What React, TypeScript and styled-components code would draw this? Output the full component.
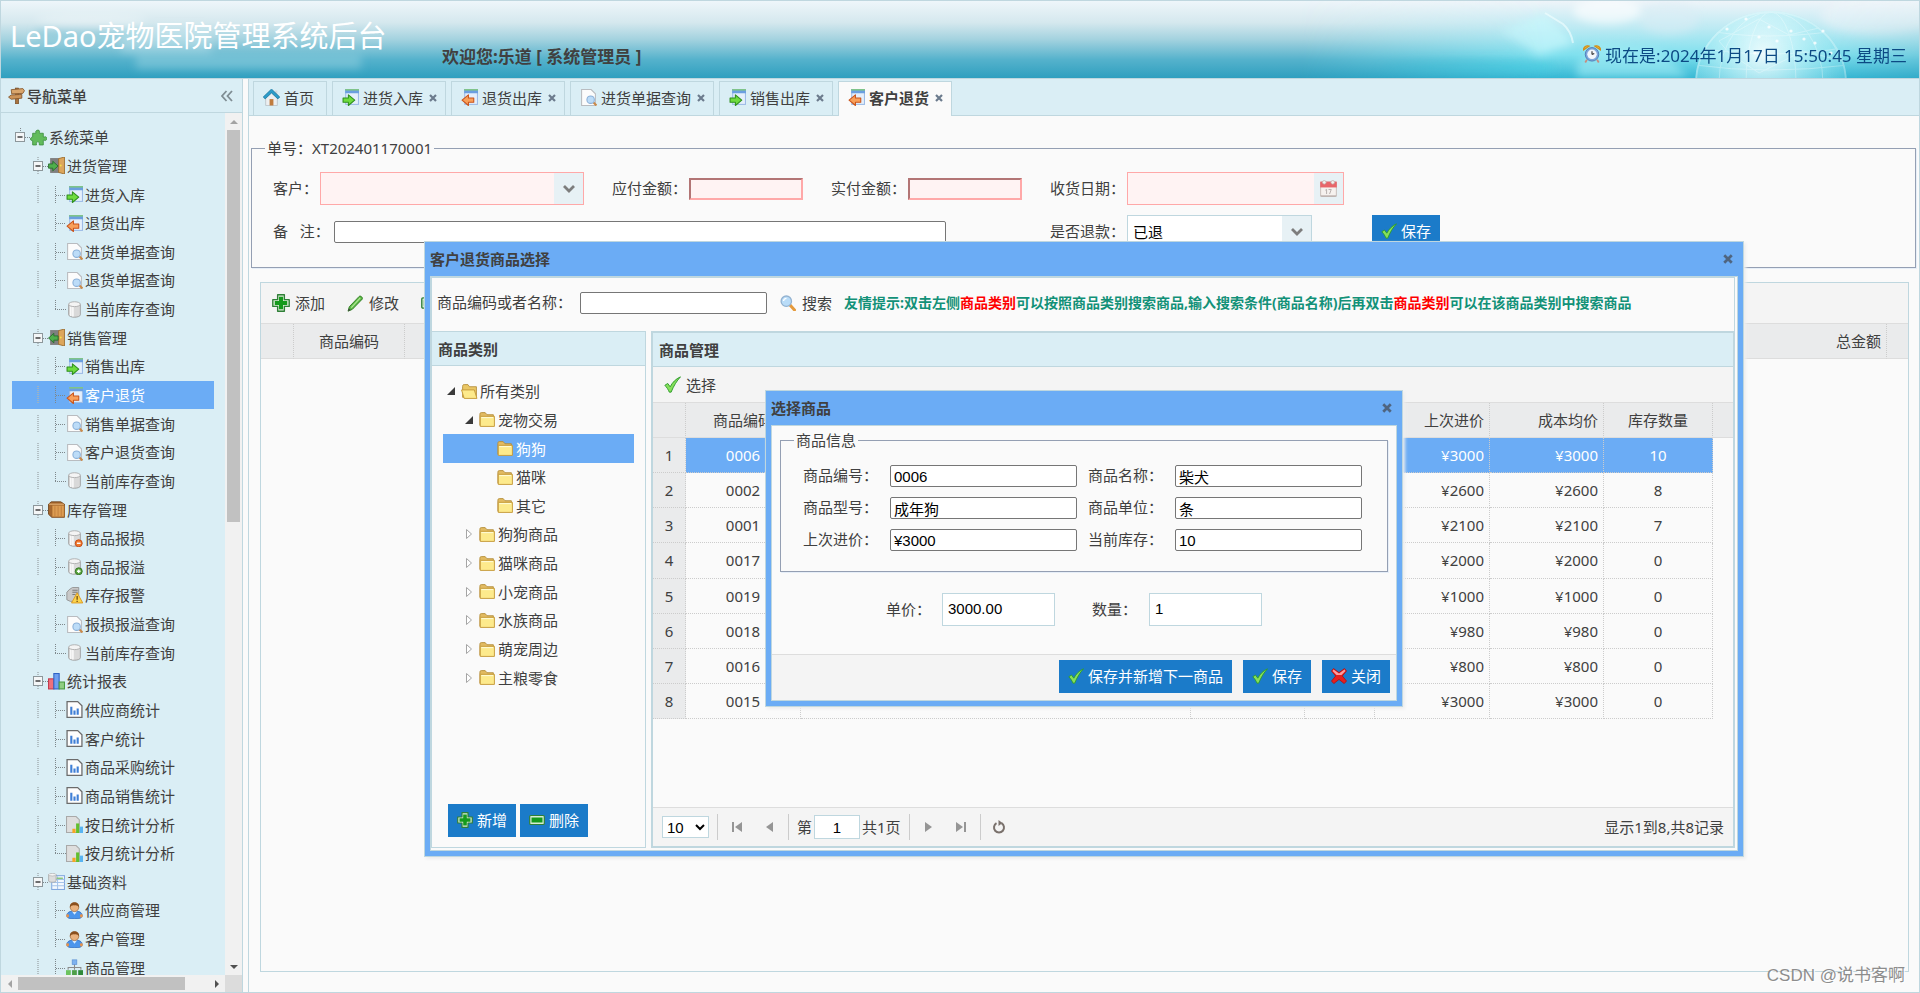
import React from 'react';
import styled, { createGlobalStyle, css } from 'styled-components';

const c = {
  pane: '#daeef5',
  line: '#bfd7df',
  blue: '#6bacf5',
  button: '#1b7bc9',
  text: '#404040',
  bg: '#fafafa',
  bar: '#f4f4f4',
  head: '#eaebec',
};
const sans = '"Noto Sans", "Noto Sans CJK SC", sans-serif';
const arial = '"Liberation Sans", "Noto Sans CJK SC", sans-serif';

const Global = createGlobalStyle`
  *, *::before, *::after { box-sizing: border-box; }
  body { margin: 0; background: ${c.bg}; color: ${c.text}; font: 15px/20px ${sans}; overflow: hidden; }
  button, input, select { font: 15px/20px ${arial}; color: #000; margin: 0; }
  svg { display: block; flex: none; }
`;

/* ---------- icons ---------- */

const Svg = ({ size = 16, children }: { size?: number; children: React.ReactNode }) => (
  <svg width={size} height={size} viewBox="0 0 16 16" aria-hidden="true">{children}</svg>
);

const DbShape = () => (
  <>
    <path d="M2.5 3v10c0 1.200 2.500 2.300 5.500 2.300s5.500-1.100 5.500-2.300V3z" fill="#d9d9d9" stroke="#9a9a9a" strokeWidth=".8" />
    <path d="M4.500 5v9M6.500 5.500v9" stroke="#f8f8f8" strokeWidth="1.600" />
    <ellipse cx="8" cy="3" rx="5.500" ry="2.300" fill="#f4f4f4" stroke="#a8a8a8" strokeWidth=".8" />
  </>
);
const WindowShape = () => (
  <>
    <rect x="3.500" y=".5" width="12" height="14" fill="#e4effb" stroke="#9dbbe6" />
    <rect x="3" y="0" width="13" height="4" fill="#6b9fe0" />
    <rect x="3" y="0" width="13" height="1.500" fill="#7fc48a" />
  </>
);
const GreenArrow = ({ d = 'M1 8.500h5V5.500l6 5-6 5v-3H1z' }: { d?: string }) => (
  <path d={d} fill="#6fdc3e" stroke="#2f8f1e" strokeWidth="1" strokeLinejoin="round" />
);
const PageShape = () => (
  <path d="M1.500.5h9l4 4v11h-13z" fill="#fcfcfc" stroke="#b9bcc0" />
);

const icons: Record<string, React.ReactNode> = {
  signpost: (
    <>
      <rect x="7" y="1" width="3" height="15" fill="#a9743f" stroke="#6e4622" strokeWidth=".6" />
      <path d="M3 2.500 14 1.500 15.500 3.500 14 6 3.500 6.500z" fill="#d9a56b" stroke="#84552b" strokeWidth=".8" />
      <path d="M13 7 3 7.500 .5 9.500 3 11.500 13 10.500z" fill="#cc9459" stroke="#84552b" strokeWidth=".8" />
    </>
  ),
  puzzle: (
    <path d="M5.500 3.500C4.500 1 9 0 9 2.500c0 .6-.3 1 0 1.500h3.500v3.500c.6.400 1.200-.3 2-.2 1.900.2 1.700 3.500-.2 3.500-.8 0-1.200-.6-1.800-.3V15H8.800c-.4-.5.300-1.200 0-2-.7-1.500-2.900-1-2.900.3 0 .7.500 1.200.2 1.700H2.500v-4c-.5-.4-2 .2-2-1.500S2 7.800 2.500 7.500V4h3z" fill="#62bb5c" stroke="#3f8f41" strokeWidth=".8" />
  ),
  doorIn: (
    <>
      <rect x="2" y="1" width="9" height="14" fill="#7f7f7f" />
      <path d="M10 1.500 15.500 0v16L10 14.500z" fill="#dca65c" stroke="#9a6a2c" strokeWidth=".8" />
      <circle cx="12" cy="8" r=".9" fill="#f8e04a" />
      <path d="M.5 6.500h4V4l5 4.500-5 4.500v-2.500h-4z" fill="#4fae4c" stroke="#256a2b" strokeWidth=".8" />
    </>
  ),
  doorOut: (
    <>
      <rect x="2" y="1" width="9" height="14" fill="#7f7f7f" />
      <path d="M10 1.500 15.500 0v16L10 14.500z" fill="#dca65c" stroke="#9a6a2c" strokeWidth=".8" />
      <circle cx="12" cy="8" r=".9" fill="#f8e04a" />
      <path d="M9.500 6.500h-4V4l-5 4.500 5 4.500v-2.500h4z" fill="#4fae4c" stroke="#256a2b" strokeWidth=".8" />
    </>
  ),
  goodsIn: (<><WindowShape /><GreenArrow /></>),
  goodsOut: (
    <>
      <WindowShape />
      <path d="M12 8.500H7V5.500l-6 5 6 5v-3h5z" fill="#f9a05a" stroke="#c9541c" strokeLinejoin="round" />
    </>
  ),
  pageFind: (
    <>
      <PageShape />
      <path d="m12.500 12.500 3 3" stroke="#c98a4b" strokeWidth="2" />
      <circle cx="10" cy="10" r="3.500" fill="#bcdcf8" stroke="#8ab0d8" />
    </>
  ),
  db: <DbShape />,
  dbDelete: (<><DbShape /><circle cx="12" cy="12.500" r="3.300" fill="#f07a2e" stroke="#c2410c" strokeWidth=".8" /><path d="M10.300 12.500h3.400" stroke="#fff" strokeWidth="1.300" /></>),
  dbAdd: (<><DbShape /><circle cx="12" cy="12.500" r="3.300" fill="#5aa63e" stroke="#2f6e1d" strokeWidth=".8" /><path d="M10.300 12.500h3.400M12 10.800v3.400" stroke="#fff" strokeWidth="1.300" /></>),
  warn: (
    <>
      <path d="M3 2.500 6 .5h6v13H4L.8 12V5z" fill="#c9c9c9" stroke="#8d8d8d" strokeWidth=".8" />
      <path d="M6 3h5M6 5h5M6 7h3" stroke="#7c7c7c" />
      <path d="M10.500 5.500 15.800 15H5.200z" fill="#fbd44c" stroke="#dd9a22" strokeWidth=".9" />
      <path d="M10.500 8.500v3.500M10.500 13v1" stroke="#7a5312" strokeWidth="1.300" />
    </>
  ),
  box: (
    <>
      <path d="M.5 3 3 .8h9L15.500 3v12.300h-12L.5 12.500z" fill="#a8692f" stroke="#6b3f17" strokeWidth=".8" />
      <path d="M3.800 4h11.500v11H3.800z" fill="#dd9d52" stroke="#a3662c" strokeWidth=".6" />
      <path d="M6.500 5v10M9.500 5v10M12.500 5v10" stroke="#c48340" />
      <path d="M1 3h14" stroke="#e6b477" />
    </>
  ),
  bars: (
    <>
      <rect x=".5" y="5.500" width="5" height="9.500" fill="#f0707c" stroke="#c43b4c" />
      <rect x="5.500" y=".5" width="5" height="14.500" fill="#6f9ff0" stroke="#2f62c4" />
      <rect x="10.500" y="8.500" width="5" height="6.500" fill="#8fce82" stroke="#4a9a42" />
    </>
  ),
  report: (
    <>
      <path d="M1 .6h10l4 4v10.800H1z" fill="#fdfdfd" stroke="#6b6b6b" strokeWidth="1.200" />
      <path d="M5 5.500V13M8 9v4M11 7v6" stroke="#3f7fd6" strokeWidth="2" />
    </>
  ),
  pageChart: (
    <>
      <path d="M.5.5h9l3 3v12H.5z" fill="#dedede" stroke="#a9a9a9" />
      <rect x="6" y="12" width="3" height="4" fill="#f5a623" />
      <rect x="9.500" y="7" width="3" height="9" fill="#62bf2e" />
      <rect x="13" y="10" width="3" height="6" fill="#58b4f2" />
    </>
  ),
  table: (
    <>
      <rect x="3.500" y="2.500" width="12" height="13" fill="#f3f8fe" stroke="#83a8de" />
      <path d="M3.500 6h12M3.500 9h12M3.500 12h12M9 3v12" stroke="#a5c3ea" />
      <path d="M8 5h6" stroke="#8bc77b" strokeWidth="1.500" />
      <path d="M.6 1.500v6c0 1.600 7 1.600 7 0v-6z" fill="#ddd" stroke="#a2a2a2" strokeWidth=".7" />
      <ellipse cx="4.100" cy="1.600" rx="3.500" ry="1.200" fill="#f6f6f6" stroke="#aaa" strokeWidth=".6" />
    </>
  ),
  user: (
    <>
      <path d="M.8 13c0-3.500 3-4.500 7.200-4.500s7.200 1 7.200 4.500C15 15.500 12 15.800 8 15.800S1 15.500.8 13z" fill="#4b95ec" stroke="#2a62b4" strokeWidth=".7" />
      <path d="M5.500 8.800 8 12l2.500-3.200z" fill="#d8ecff" />
      <circle cx="8" cy="5" r="4" fill="#eab27e" stroke="#9c5f2a" strokeWidth=".6" />
      <path d="M3.700 5.500C3.300 1.500 5.500.3 8 .3s4.700 1.200 4.300 5.200C11.500 3.500 10 3 8 3.200 6 3 4.500 3.500 3.700 5.500z" fill="#8a4f1d" />
      <rect x=".3" y="11.500" width="2.500" height="3" rx="1" fill="#e9934a" />
      <rect x="13.200" y="11.500" width="2.500" height="3" rx="1" fill="#e9934a" />
    </>
  ),
  sitemap: (
    <>
      <path d="M8 5v5M2 10V8h12v2" stroke="#8a8a8a" fill="none" />
      <rect x="5.800" y=".8" width="4.400" height="4.400" fill="#7eb2ef" stroke="#5a8ed2" strokeWidth=".6" />
      <rect x="0" y="10.500" width="4.500" height="5" fill="#6cc35f" />
      <rect x="5.700" y="10.500" width="4.500" height="5" fill="#4f9f48" />
      <rect x="11.500" y="10.500" width="4.500" height="5" fill="#2f8a3a" />
    </>
  ),
  home: (
    <>
      <path d="M2.500 8v7.500h11V8L8 3z" fill="#eceff1" stroke="#b3bbc1" strokeWidth=".7" />
      <rect x="11.300" y="1.500" width="2.200" height="4" fill="#d4d9dd" />
      <path d="M8 0 .2 7.500 2 9.300l6-5.500 6 5.500 1.800-1.800z" fill="#2b9cc9" stroke="#156b93" strokeWidth=".6" />
      <rect x="6.200" y="9.500" width="3.600" height="6" fill="#c07c3e" />
    </>
  ),
  calendar: (
    <>
      <rect x=".6" y="2" width="14.800" height="13.500" rx=".8" fill="#f6f2ef" stroke="#c3b8b2" strokeWidth=".8" />
      <rect x=".2" y="1.500" width="15.600" height="5.500" fill="#e8666a" />
      <circle cx="4" cy="2.200" r="1.700" fill="#f3f0ee" stroke="#b9a9a6" strokeWidth=".6" />
      <circle cx="12" cy="2.200" r="1.700" fill="#f3f0ee" stroke="#b9a9a6" strokeWidth=".6" />
      <path d="m5 9.600 1.200-.8v4.400M8 8.900h2.600L9 13.200" stroke="#b6adab" fill="none" strokeWidth=".9" />
      <path d="M.5 15h15" stroke="#b5aaa6" />
    </>
  ),
  check: (
    <path d="M.8 8.800 3.500 7l2.300 3.200C8 6 11 2.800 15.500.8 12 4.500 9 9.500 6.700 15.200H5C4 12.800 2.800 10.800.8 8.800z" fill="#86e05a" stroke="#2d9a2c" strokeWidth=".9" strokeLinejoin="round" />
  ),
  plus: (
    <>
      <path d="M5 .7h6V5h4.300v6H11v4.300H5V11H.7V5H5z" fill="#d8ecd4" stroke="#2f7f37" strokeWidth="1.200" strokeLinejoin="round" />
      <path d="M6.200 2.500h3.600v3.700h3.700v3.600H9.800v3.700H6.200V9.800H2.500V6.200h3.700z" fill="#159a1c" />
    </>
  ),
  minus: (
    <>
      <rect x=".7" y="3.500" width="14.600" height="9" rx="1" fill="#d8ecd4" stroke="#2f7f37" strokeWidth="1.200" />
      <rect x="2.500" y="5.500" width="11" height="5" fill="#159a1c" />
    </>
  ),
  pencil: (
    <>
      <path d="M1 15.200 2.200 11 11.500 1.300c1-1 3.800 1 2.800 2.600L5 13.500z" fill="#5cb946" stroke="#2f7c22" strokeWidth=".9" />
      <path d="m4 11.800 8.500-9" stroke="#b7ea9b" />
      <path d="m1 15.200.8-2.600 1.700 1.600z" fill="#444" />
    </>
  ),
  search: (
    <>
      <path d="m10 10 4.500 5" stroke="#e59a3c" strokeWidth="3" strokeLinecap="round" />
      <circle cx="6.300" cy="6.200" r="5.200" fill="#b9dcf8" stroke="#93b2d0" strokeWidth="1.300" />
      <path d="M3.500 6c.2-1.700 1.300-2.600 3-2.700" stroke="#fff" fill="none" strokeWidth="1.300" />
    </>
  ),
  cancel: (
    <>
      <path d="M2.500.6 8 4.600 13.500.6l2 2.400-4.200 5 4.200 5-2.300 2.600L8 11.400l-5.200 4.200L.5 13l4.200-5L.5 3z" fill="#e51f1f" stroke="#b30d0d" strokeWidth=".8" strokeLinejoin="round" />
      <path d="M2.500 1.500 8 5.600l5.500-4.100 1 1.400L10.500 7h-5l-4-4z" fill="#ff9d9d" />
    </>
  ),
  alarm: (
    <>
      <path d="m3.500 13-1.500 2.500M12.500 13l1.500 2.500" stroke="#c98b7e" strokeWidth="1.600" />
      <path d="M.4 4.500C.4 1.500 3 0 5.500 1zM15.600 4.500C15.600 1.500 13 0 10.500 1z" fill="#f2b632" stroke="#cf8d1b" strokeWidth="1" />
      <circle cx="8" cy="8.300" r="6" fill="#7ca6dc" stroke="#4c78b6" strokeWidth=".8" />
      <circle cx="8" cy="8.300" r="4.200" fill="#f2f6fb" />
      <path d="M8 8.500V5.500M8 8.500l2-1" stroke="#333" />
    </>
  ),
  folder: (
    <>
      <path d="M.8 3.500c0-1.500.5-2 1.500-2h3.500L7.500 3.500h6v10H.8z" fill="#e2bb62" stroke="#b28a35" strokeWidth=".8" />
      <path d="M1.200 5h13.300v9.500H1.200z" fill="#fdea8c" stroke="#c59b3c" strokeWidth=".9" />
      <path d="M2.200 6.200h11" stroke="#fffbd6" />
    </>
  ),
  folderOpen: (
    <>
      <path d="M1.500 3.500c0-1.500.5-2 1.500-2h3.500l1.500 2h6.500v10h-13z" fill="#eac765" stroke="#b28a35" strokeWidth=".8" />
      <path d="M.5 6.500h12l2.500 8H3z" fill="#fdea8c" stroke="#c59b3c" strokeWidth=".9" />
    </>
  ),
};

const Icon = ({ name, size }: { name: string; size?: number }) => <Svg size={size}>{icons[name]}</Svg>;

const Cross = ({ size = 8, color = '#6c7b8d' }: { size?: number; color?: string }) => (
  <svg width={size} height={size} viewBox="0 0 8 8" aria-hidden="true">
    <path d="m1 1 6 6M7 1 1 7" stroke={color} strokeWidth="2.200" />
  </svg>
);

const Chevron = () => (
  <svg width="12" height="8" viewBox="0 0 12 8" aria-hidden="true">
    <path d="m1 1 5 5 5-5" fill="none" stroke="#7d7d7d" strokeWidth="2.800" />
  </svg>
);

type Joint = 'minusRoot' | 'minus' | 'line' | 'join' | 'last' | 'none' | 'open' | 'closed';
const JointCell = ({ kind }: { kind: Joint }) => {
  const soft = <path d="M8 0v18" stroke="#a9b4b8" strokeWidth="2" strokeDasharray="1 1" opacity=".8" />;
  const dash = { stroke: '#7e878b', strokeWidth: 1, strokeDasharray: '1 1' };
  return (
    <svg width="18" height="18" viewBox="0 0 18 18" aria-hidden="true">
      {kind === 'line' && soft}
      {kind === 'minus' && soft}
      {kind === 'minusRoot' && <path d="M8.500 0v5" {...dash} />}
      {kind === 'join' && <path d="M7.500 0v18M8 9.500h10" {...dash} />}
      {kind === 'last' && <path d="M7.500 0v9M7 9.500h11" {...dash} />}
      {(kind === 'minus' || kind === 'minusRoot') && (
        <>
          <path d="M13 9.500h5" {...dash} />
          <rect x="3.500" y="4.500" width="9" height="9" fill="#f4f6f7" stroke="#8d979b" />
          <path d="M5.500 9h5" stroke="#333" strokeWidth="1.400" />
        </>
      )}
      {kind === 'open' && <path d="M12 5v8H4z" fill="#3a3a3a" />}
      {kind === 'closed' && <path d="M5.500 4.500v9l5-4.500z" fill="#fff" stroke="#a5a5a5" />}
    </svg>
  );
};

/* ---------- page frame ---------- */

const Page = styled.div`
  display: grid;
  grid-template: 78px minmax(0, 1fr) / 242px minmax(0, 1fr);
  column-gap: 5px;
  height: 100vh;
  border: 1px solid ${c.line};
  position: relative;
`;
const Header = styled.header`
  grid-column: 1 / -1;
  position: relative;
  display: flex;
  border-bottom: 1px solid ${c.line};
  background: linear-gradient(#eef6fa 0, #d5e8ee 28%, #a3d2df 50%, #55b2cc 76%, #2f9fbf 100%);
  overflow: hidden;
`;
const HeaderArt = styled.svg<{ $side: 'left' | 'right' }>`
  position: absolute;
  top: 0;
  ${p => p.$side}: 0;
`;
const Brand = styled.h1`
  position: relative;
  margin: 15px 0 0 9px;
  width: 432px;
  font-size: 29px;
  line-height: 40px;
  font-weight: 400;
  color: #fff;
  white-space: nowrap;
`;
const Welcome = styled.div`
  position: relative;
  margin-top: 46px;
  font-size: 17px;
  font-weight: 700;
`;
const Clock = styled.div`
  position: relative;
  display: flex;
  gap: 4px;
  margin: 44px 12px 0 auto;
  font-size: 17px;
  line-height: 22px;
  color: #0c4a84;
`;

/* ---------- navigation ---------- */

const Nav = styled.nav`
  display: flex;
  flex-direction: column;
  min-height: 0;
  background: ${c.pane};
  border-right: 1px solid ${c.line};
`;
const NavTitle = styled.h2`
  display: flex;
  align-items: center;
  gap: 2px;
  flex: none;
  margin: 0;
  height: 34px;
  padding: 0 9px 0 7px;
  border-bottom: 1px solid ${c.line};
  font-size: 15px;
  line-height: 20px;
  font-weight: 500;
`;
const Collapse = styled.button`
  margin-left: auto;
  padding: 0;
  border: 0;
  background: none;
`;
const NavBody = styled.div`
  flex: 1;
  min-height: 0;
  display: grid;
  grid-template: minmax(0, 1fr) 17px / minmax(0, 1fr) 17px;
`;
const NavScroll = styled.div`
  overflow: hidden;
  padding: 10px 11px 0;
`;
const Track = styled.div<{ $row?: boolean }>`
  display: flex;
  flex-direction: ${p => (p.$row ? 'row' : 'column')};
  align-items: center;
  justify-content: space-between;
  background: #f1f1f1;
`;
const ScrollStart = styled.div<{ $row?: boolean }>`
  display: flex;
  flex-direction: ${p => (p.$row ? 'row' : 'column')};
  align-items: center;
`;
const Arrow = styled.span`
  display: grid;
  place-items: center;
  width: 17px;
  height: 17px;
`;
const Thumb = styled.span<{ $row?: boolean }>`
  background: #c1c1c1;
  ${p => (p.$row ? css`width: 167px; height: 13px;` : css`width: 13px; height: 392px;`)}
`;
const Corner = styled.div`background: #dcdcdc;`;

const Tree = styled.ul<{ $height: number }>`
  list-style: none;
  margin: 0;
  padding: 0;
  display: grid;
  grid-auto-rows: 1fr;
  height: ${p => p.$height}px;
`;
const TreeLink = styled.a<{ $on?: boolean }>`
  display: flex;
  align-items: center;
  height: 100%;
  color: ${p => (p.$on ? '#fff' : c.text)};
  background: ${p => (p.$on ? c.blue : 'transparent')};
  text-decoration: none;
  white-space: nowrap;
`;
const TreeIcon = styled.span`
  flex: none;
  width: 18px;
`;
const TreeText = styled.span`margin-left: 1px;`;

type Node = [joints: Joint[], icon: string, label: string];
const leaf = (icon: string, label: string, last?: boolean): Node => [['none', 'line', last ? 'last' : 'join'], icon, label];
const group = (icon: string, label: string): Node => [['none', 'minus'], icon, label];

const menu: Node[] = [
  [['minusRoot'], 'puzzle', '系统菜单'],
  group('doorIn', '进货管理'),
  leaf('goodsIn', '进货入库'),
  leaf('goodsOut', '退货出库'),
  leaf('pageFind', '进货单据查询'),
  leaf('pageFind', '退货单据查询'),
  leaf('db', '当前库存查询', true),
  group('doorOut', '销售管理'),
  leaf('goodsIn', '销售出库'),
  leaf('goodsOut', '客户退货'),
  leaf('pageFind', '销售单据查询'),
  leaf('pageFind', '客户退货查询'),
  leaf('db', '当前库存查询', true),
  group('box', '库存管理'),
  leaf('dbDelete', '商品报损'),
  leaf('dbAdd', '商品报溢'),
  leaf('warn', '库存报警'),
  leaf('pageFind', '报损报溢查询'),
  leaf('db', '当前库存查询', true),
  group('bars', '统计报表'),
  leaf('report', '供应商统计'),
  leaf('report', '客户统计'),
  leaf('report', '商品采购统计'),
  leaf('report', '商品销售统计'),
  leaf('pageChart', '按日统计分析'),
  leaf('pageChart', '按月统计分析', true),
  group('table', '基础资料'),
  leaf('user', '供应商管理'),
  leaf('user', '客户管理'),
  leaf('sitemap', '商品管理'),
];
const categories: Node[] = [
  [['open'], 'folderOpen', '所有类别'],
  [['none', 'open'], 'folder', '宠物交易'],
  [['none', 'none', 'none'], 'folder', '狗狗'],
  [['none', 'none', 'none'], 'folder', '猫咪'],
  [['none', 'none', 'none'], 'folder', '其它'],
  ...['狗狗商品', '猫咪商品', '小宠商品', '水族商品', '萌宠周边', '主粮零食'].map(
    (t): Node => [['none', 'closed'], 'folder', t],
  ),
];

const TreeView = ({ nodes, selected, height }: { nodes: Node[]; selected: string; height: number }) => (
  <Tree $height={height}>
    {nodes.map(([joints, icon, label], i) => (
      <li key={i}>
        <TreeLink href="#" $on={label === selected}>
          {joints.map((k, j) => <JointCell key={j} kind={k} />)}
          <TreeIcon><Icon name={icon} size={17} /></TreeIcon>
          <TreeText>{label}</TreeText>
        </TreeLink>
      </li>
    ))}
  </Tree>
);

/* ---------- workspace ---------- */

const Main = styled.main`
  display: flex;
  flex-direction: column;
  min-width: 0;
  min-height: 0;
  border-left: 1px solid ${c.line};
`;
const Tabs = styled.div`
  display: flex;
  align-items: flex-end;
  gap: 5px;
  flex: none;
  height: 37px;
  padding-left: 4px;
  background: ${c.pane};
  border-bottom: 1px solid ${c.line};
`;
const Tab = styled.div<{ $on?: boolean; $plain?: boolean }>`
  display: flex;
  align-items: center;
  height: 34px;
  padding: 0 ${p => (p.$plain ? 12 : 8)}px 2px 9px;
  border: 1px solid ${c.line};
  border-bottom: 0;
  background: ${p => (p.$on ? c.bg : c.pane)};
  font-weight: ${p => (p.$on ? 700 : 400)};
  ${p => p.$on && css`height: 35px; margin-bottom: -1px; padding-bottom: 3px;`}
`;
const TabName = styled.button`
  display: flex;
  align-items: center;
  gap: 4px;
  padding: 0;
  border: 0;
  background: none;
  font: inherit;
  color: inherit;
`;
const IconButton = styled.button`
  display: grid;
  place-items: center;
  margin-left: 6px;
  padding: 0;
  border: 0;
  background: none;
`;

const Fieldset = styled.fieldset<{ $dialog?: boolean }>`
  min-width: 0;
  border: 1px solid #949fb3;
  box-shadow: 1px 1px 0 #e6eef8;
  ${p => p.$dialog
    ? css`margin: 0; padding: 15px 22px 20px;`
    : css`margin: 22px 3px 0 2px; padding: 14px 21px 19px;`}
`;
const Legend = styled.legend<{ $inset: number }>`
  margin-left: ${p => p.$inset}px;
  padding: 0 2px;
  line-height: 20px;
`;
const FormRow = styled.div`
  display: flex;
  align-items: center;
  height: 33px;
  & + & { margin-top: 10px; }
`;
const Label = styled.label<{ $w: number; $gap?: number }>`
  flex: none;
  width: ${p => p.$w}px;
  margin-left: ${p => p.$gap || 0}px;
  padding-bottom: 2px;
  white-space: nowrap;
`;
const TextBox = styled.input<{ $w: number }>`
  flex: none;
  width: ${p => p.$w}px;
  height: 22px;
  padding: 0 3px;
  border: 1px solid #767676;
  border-radius: 2px;
  background: #fff;
`;
const MoneyBox = styled(TextBox)`
  border: 2px solid #ffa8a8;
  border-top-color: #b27575;
  border-left-color: #b27575;
  border-radius: 0;
  background: #fff3f3;
`;
const PlainBox = styled(TextBox)`
  height: 33px;
  padding: 0 5px 2px;
  border-color: ${c.line};
  border-radius: 0;
`;
const Combo = styled.div<{ $w: number; $invalid?: boolean }>`
  display: flex;
  flex: none;
  width: ${p => p.$w}px;
  height: 33px;
  border: 1px solid ${p => (p.$invalid ? '#ffa8a8' : c.line)};
  background: ${p => (p.$invalid ? '#fff3f3' : '#fff')};
`;
const comboField = css`
  flex: 1;
  min-width: 0;
  padding: 0 5px;
  border: 0;
  background: none;
  appearance: none;
  font-family: ${sans};
`;
const ComboSelect = styled.select`${comboField}`;
const ComboInput = styled.input`${comboField}`;
const Addon = styled.button`
  display: grid;
  place-items: center;
  width: 29px;
  padding: 0;
  border: 0;
  background: #e7f1f5;
`;
const Button = styled.button<{ $gap?: number }>`
  display: flex;
  align-items: center;
  gap: 4px;
  height: 33px;
  margin-left: ${p => p.$gap || 0}px;
  padding: 0 9px 2px;
  border: 0;
  background: ${c.button};
  color: #fff;
  font-family: ${sans};
  white-space: nowrap;
`;
const Tool = styled.button`
  display: flex;
  align-items: center;
  gap: 5px;
  padding: 0;
  border: 0;
  background: none;
  color: ${c.text};
  font-family: ${sans};
`;
const GridPanel = styled.section`
  flex: 1;
  min-height: 0;
  margin: 14px 10px 20px 11px;
  border: 1px solid ${c.line};
`;
const ToolBar = styled.div<{ $h: number }>`
  display: flex;
  align-items: center;
  gap: 22px;
  height: ${p => p.$h}px;
  padding: 0 11px;
  background: ${c.bar};
  border-bottom: 1px solid #ddd;
`;
const Table = styled.table`
  width: 100%;
  border-collapse: separate;
  border-spacing: 0;
  table-layout: fixed;
  th { font-weight: 400; }
`;
const Th = styled.th<{ $align?: string; $end?: boolean; $open?: boolean }>`
  height: 35px;
  padding: 0 5px;
  text-align: ${p => p.$align || 'center'};
  background: ${c.head};
  border-bottom: 1px solid #ddd;
  border-right: ${p => (p.$end || p.$open ? 0 : '1px dotted #ccc')};
`;
const Rows = styled.tbody`
  height: 281px;
`;
const Td = styled.td<{ $align?: string; $end?: boolean }>`
  padding: 0 5px;
  text-align: ${p => p.$align || 'center'};
  ${p => !p.$end && css`
    border-right: 1px dotted #ccc;
    border-bottom: 1px dotted #ccc;
  `}
`;
const Tr = styled.tr<{ $on?: boolean }>`
  td:first-child { background: ${c.head}; }
  ${p => p.$on && css`
    td:not(:first-child):not(:last-child) { background: ${c.blue}; color: #fff; }
  `}
`;

/* ---------- floating windows ---------- */

const Window = styled.section`
  position: absolute;
  display: flex;
  flex-direction: column;
  padding: 0 5px 5px;
  border: 1px solid ${c.line};
  background: ${c.blue};
  box-shadow: 2px 2px 3px #eee;
`;
const PickWindow = styled(Window)`
  top: 240px;
  left: 423px;
  right: 175px;
  height: 616px;
`;
const ItemWindow = styled(Window)`
  top: 389px;
  left: 764px;
  width: 638px;
`;
const WindowTitle = styled.h2`
  display: flex;
  align-items: center;
  justify-content: space-between;
  flex: none;
  height: 34px;
  margin: 0;
  padding: 0 5px 1px 0;
  font-size: 15px;
  line-height: 20px;
  font-weight: 700;
`;
const WindowBody = styled.div`
  flex: 1;
  min-height: 0;
  display: flex;
  flex-direction: column;
  border: 1px solid ${c.line};
  background: ${c.bg};
`;
const PickBody = styled(WindowBody)`
  padding: 0 2px 2px 0;
`;
const SearchBar = styled.div`
  display: flex;
  align-items: center;
  height: 54px;
  padding: 0 0 3px 5px;
  border: 1px solid ${c.line};
  border-bottom: 0;
`;
const SearchTool = styled(Tool)`
  gap: 6px;
  margin: 0 12px 0 13px;
`;
const Tip = styled.p`
  margin: 0;
  font-size: 14px;
  font-weight: 700;
  color: #129178;
  white-space: nowrap;
  em { font-style: normal; color: #f00; }
`;
const Split = styled.div`
  flex: 1;
  min-height: 0;
  display: grid;
  grid-template-columns: 215px minmax(0, 1fr);
  column-gap: 5px;
`;
const Side = styled.div`
  display: flex;
  flex-direction: column;
  border: 1px solid ${c.line};
`;
const Center = styled.div`
  display: flex;
  flex-direction: column;
  border: 2px solid ${c.line};
`;
const PaneTitle = styled.h3`
  margin: 0;
  height: 34px;
  padding-left: 6px;
  background: ${c.pane};
  border-bottom: 1px solid ${c.line};
  font-size: 15px;
  line-height: 34px;
  font-weight: 700;
`;
const SideTree = styled.div`
  flex: 1;
  padding: 11px 11px 0;
`;
const SideButtons = styled.div`
  display: flex;
  gap: 4px;
  padding: 0 0 10px 16px;
`;
const Pager = styled.div`
  display: flex;
  align-items: center;
  height: 39px;
  margin-top: auto;
  padding: 0 9px;
  background: ${c.bar};
  border-top: 1px solid #ddd;
`;
const PageSize = styled.select`
  width: 47px;
  height: 22px;
  border: 1px solid ${c.line};
  background: #fff;
`;
const PageNo = styled(TextBox)`
  height: 24px;
  margin: 0 2px;
  text-align: center;
  border-color: ${c.line};
  border-radius: 0;
`;
const Sep = styled.span`
  width: 1px;
  height: 26px;
  margin: 0 8px;
  background: #ccc;
`;
const PageButton = styled.button`
  display: grid;
  place-items: center;
  width: 21px;
  height: 22px;
  padding: 0;
  border: 0;
  background: none;
  & + & { margin-left: 12px; }
`;
const Summary = styled.span`margin-left: auto;`;
const ItemContent = styled.div`
  padding: 4px 8px 28px;
`;
const InfoGrid = styled.div`
  display: grid;
  grid-template-columns: 274px 274px;
  column-gap: 11px;
  row-gap: 10px;
`;
const InfoField = styled.div`
  display: flex;
  align-items: center;
`;
const PriceRow = styled.div`
  display: flex;
  margin: 21px 0 0 106px;
  align-items: center;
`;
const ItemFooter = styled.div`
  display: flex;
  justify-content: flex-end;
  gap: 11px;
  padding: 5px 6px 7px;
  background: ${c.bar};
  border-top: 1px solid #ddd;
`;
const Watermark = styled.div`
  position: absolute;
  right: 14px;
  bottom: 4px;
  font: 17px/24px ${arial};
  color: #8d8d8d;
  text-shadow: 1px 1px 0 #fff;
`;

const tabs: [string, string][] = [
  ['home', '首页'],
  ['goodsIn', '进货入库'],
  ['goodsOut', '退货出库'],
  ['pageFind', '进货单据查询'],
  ['goodsIn', '销售出库'],
  ['goodsOut', '客户退货'],
];
const goods: [string, string, string][] = [
  ['0006', '¥3000', '10'],
  ['0002', '¥2600', '8'],
  ['0001', '¥2100', '7'],
  ['0017', '¥2000', '0'],
  ['0019', '¥1000', '0'],
  ['0018', '¥980', '0'],
  ['0016', '¥800', '0'],
  ['0015', '¥3000', '0'],
];
const info: [string, string][] = [
  ['商品编号', '0006'],
  ['商品名称', '柴犬'],
  ['商品型号', '成年狗'],
  ['商品单位', '条'],
  ['上次进价', '¥3000'],
  ['当前库存', '10'],
];

const Triangle = ({ d, fill = '#505050' }: { d: string; fill?: string }) => (
  <svg width="8" height="8" viewBox="0 0 8 8" aria-hidden="true"><path d={d} fill={fill} /></svg>
);
const PageIcon = ({ d, bar }: { d: string; bar?: string }) => (
  <svg width="12" height="12" viewBox="0 0 12 12" aria-hidden="true">
    <path d={d} fill="#959595" />
    {bar && <path d={bar} stroke="#959595" strokeWidth="2" />}
  </svg>
);

const HeaderDecor = () => (
  <>
    <HeaderArt $side="left" width="420" height="77" viewBox="0 0 420 77" aria-hidden="true">
      <defs>
        <filter id="soft" x="-20%" y="-60%" width="140%" height="220%"><feGaussianBlur stdDeviation="4" /></filter>
      </defs>
      <g filter="url(#soft)">
        <ellipse cx="90" cy="20" rx="55" ry="7" fill="#fff" opacity=".3" />
        <rect x="35" y="27" width="105" height="12" fill="#6fbfd2" opacity=".4" />
        <rect x="120" y="26" width="90" height="26" fill="#d4eef4" opacity=".3" />
        <rect x="135" y="54" width="225" height="14" fill="#b6e2ec" opacity=".35" />
      </g>
    </HeaderArt>
    <HeaderArt $side="right" width="620" height="77" viewBox="0 0 620 77" aria-hidden="true">
      <defs>
        <linearGradient id="fade"><stop offset="0" stopColor="#fff" stopOpacity="0" /><stop offset=".4" stopColor="#fff" /><stop offset=".85" stopColor="#fff" /><stop offset="1" stopColor="#fff" stopOpacity=".5" /></linearGradient>
        <linearGradient id="cyan" x1="0" y1="0" x2="0" y2="1">
          <stop offset="0" stopColor="#eef4f9" /><stop offset=".35" stopColor="#bdeaf3" /><stop offset=".7" stopColor="#7fe0ee" /><stop offset="1" stopColor="#37b8d4" />
        </linearGradient>
        <radialGradient id="globe" cx=".45" cy=".3" r=".6"><stop offset="0" stopColor="#fff" /><stop offset=".4" stopColor="#c9f5fa" stopOpacity=".8" /><stop offset="1" stopColor="#79dcea" stopOpacity=".4" /></radialGradient>
        <mask id="fadeMask"><rect width="620" height="77" fill="url(#fade)" /></mask>
        <filter id="blur" x="-20%" y="-20%" width="140%" height="140%"><feGaussianBlur stdDeviation="4" /></filter>
        <clipPath id="globeClip"><ellipse cx="472" cy="82" rx="76" ry="72" /></clipPath>
      </defs>
      <g mask="url(#fadeMask)">
        <rect width="620" height="77" fill="url(#cyan)" />
        <g filter="url(#blur)">
          <path d="M200 30 246 12 275 42 240 54z" fill="#c6f7fc" opacity=".7" />
          <ellipse cx="308" cy="10" rx="34" ry="13" fill="#fff" opacity=".6" />
          <path d="M278 62 300 42l60 6 30 28H278z" fill="#a4ecf5" opacity=".6" />
          <ellipse cx="370" cy="18" rx="30" ry="16" fill="#dceef5" opacity=".5" />
          <ellipse cx="580" cy="14" rx="60" ry="20" fill="#f0f4fa" opacity=".5" />
          <ellipse cx="170" cy="66" rx="90" ry="8" fill="#43cfe4" opacity=".5" />
        </g>
        <path d="m246 12 18 11q8 7 10 19" stroke="#f4ffff" strokeWidth="2" fill="none" opacity=".6" />
        <ellipse cx="472" cy="82" rx="76" ry="72" fill="url(#globe)" opacity=".85" />
        <g clipPath="url(#globeClip)" stroke="#fff" fill="none" opacity=".3">
          <ellipse cx="472" cy="82" rx="75" ry="71" strokeWidth="2" />
          <ellipse cx="472" cy="82" rx="52" ry="71" />
          <ellipse cx="472" cy="82" rx="25" ry="71" />
          <path d="M400 28q65 14 150 0M396 46q72 14 154 0M396 64q72 10 154 0" />
          <path d="m420 40 40-22 30 16 34-8 20 34-40-10-44 22-30-20z" />
        </g>
        <g fill="#fff" opacity=".8">
          {[[428, 28], [447, 18], [460, 36], [470, 26], [478, 40], [492, 30], [505, 38], [516, 42], [440, 48], [532, 52], [456, 52], [524, 30]].map(([x, y]) => (
            <circle key={`${x}-${y}`} cx={x} cy={y} r="1.600" />
          ))}
        </g>
      </g>
    </HeaderArt>
  </>
);

export default function App() {
  return (
    <Page>
      <Global />
      <Header>
        <HeaderDecor />
        <Brand>LeDao宠物医院管理系统后台</Brand>
        <Welcome>欢迎您:乐道 [ 系统管理员 ]</Welcome>
        <Clock><Icon name="alarm" size={18} />现在是:2024年1月17日 15:50:45 星期三</Clock>
      </Header>

      <Nav>
        <NavTitle>
          <Icon name="signpost" size={17} />
          导航菜单
          <Collapse aria-label="折叠">
            <svg width="12" height="12" viewBox="0 0 12 12" aria-hidden="true">
              <path d="M5.500 1 1 6l4.500 5M11 1 6.500 6l4.500 5" fill="none" stroke="#7f8d93" strokeWidth="1.800" />
            </svg>
          </Collapse>
        </NavTitle>
        <NavBody>
          <NavScroll><TreeView nodes={menu} selected="客户退货" height={859} /></NavScroll>
          <Track>
            <ScrollStart>
              <Arrow><Triangle d="M0 6 4 2l4 4z" fill="#a3a3a3" /></Arrow>
              <Thumb />
            </ScrollStart>
            <Arrow><Triangle d="M0 2h8L4 6z" /></Arrow>
          </Track>
          <Track $row>
            <ScrollStart $row>
              <Arrow><Triangle d="M6 0v8L2 4z" fill="#a3a3a3" /></Arrow>
              <Thumb $row />
            </ScrollStart>
            <Arrow><Triangle d="M2 0v8l4-4z" /></Arrow>
          </Track>
          <Corner />
        </NavBody>
      </Nav>

      <Main>
        <Tabs>
          {tabs.map(([icon, name], i) => (
            <Tab key={name} $plain={i === 0} $on={i === 5}>
              <TabName><Icon name={icon} size={17} />{name}</TabName>
              {i > 0 && <IconButton aria-label={`关闭${name}`}><Cross /></IconButton>}
            </Tab>
          ))}
        </Tabs>

        <Fieldset>
          <Legend $inset={-8}>单号：XT202401170001</Legend>
          <FormRow>
            <Label $w={47} htmlFor="customer">客户：</Label>
            <Combo $w={264} $invalid>
              <ComboSelect id="customer" />
              <Addon tabIndex={-1} aria-label="选择客户"><Chevron /></Addon>
            </Combo>
            <Label $w={77} $gap={28} htmlFor="payable">应付金额：</Label>
            <MoneyBox $w={114} id="payable" />
            <Label $w={77} $gap={28} htmlFor="paid">实付金额：</Label>
            <MoneyBox $w={114} id="paid" />
            <Label $w={77} $gap={28} htmlFor="date">收货日期：</Label>
            <Combo $w={217} $invalid>
              <ComboInput id="date" />
              <Addon aria-label="选择日期"><Icon name="calendar" size={17} /></Addon>
            </Combo>
          </FormRow>
          <FormRow>
            <Label $w={61} htmlFor="remark">备&nbsp;&nbsp;&nbsp;注：</Label>
            <TextBox $w={612} id="remark" />
            <Label $w={77} $gap={104} htmlFor="refund">是否退款：</Label>
            <Combo $w={185}>
              <ComboSelect id="refund"><option>已退</option></ComboSelect>
              <Addon tabIndex={-1} aria-label="选择是否退款"><Chevron /></Addon>
            </Combo>
            <Button $gap={60}><Icon name="check" />保存</Button>
          </FormRow>
        </Fieldset>

        <GridPanel>
          <ToolBar $h={41}>
            <Tool><Icon name="plus" size={18} />添加</Tool>
            <Tool><Icon name="pencil" size={17} />修改</Tool>
            <Tool><Icon name="minus" size={18} />删除</Tool>
          </ToolBar>
          <Table>
            <colgroup>
              <col style={{ width: 33 }} /><col style={{ width: 111 }} /><col /><col style={{ width: 110 }} /><col style={{ width: 21 }} />
            </colgroup>
            <thead>
              <tr><Th /><Th>商品编码</Th><Th $open /><Th $align="right">总金额</Th><Th $end /></tr>
            </thead>
          </Table>
        </GridPanel>
      </Main>

      <PickWindow role="dialog" aria-label="客户退货商品选择">
        <WindowTitle>
          客户退货商品选择
          <IconButton aria-label="关闭"><Cross size={10} color="#4f6580" /></IconButton>
        </WindowTitle>
        <PickBody>
          <SearchBar>
            <Label $w={143} htmlFor="keyword">商品编码或者名称：</Label>
            <TextBox $w={187} id="keyword" />
            <SearchTool><Icon name="search" />搜索</SearchTool>
            <Tip>友情提示:双击左侧<em>商品类别</em>可以按照商品类别搜索商品,输入搜索条件(商品名称)后再双击<em>商品类别</em>可以在该商品类别中搜索商品</Tip>
          </SearchBar>
          <Split>
            <Side>
              <PaneTitle>商品类别</PaneTitle>
              <SideTree><TreeView nodes={categories} selected="狗狗" height={315} /></SideTree>
              <SideButtons>
                <Button><Icon name="plus" />新增</Button>
                <Button><Icon name="minus" />删除</Button>
              </SideButtons>
            </Side>
            <Center>
              <PaneTitle>商品管理</PaneTitle>
              <ToolBar $h={36}><Tool><Icon name="check" size={17} />选择</Tool></ToolBar>
              <Table>
                <colgroup>
                  {[33, 115, 0, 114, 70, 115, 114, 109, 20].map((w, i) => (
                    <col key={i} style={w ? { width: w } : undefined} />
                  ))}
                </colgroup>
                <thead>
                  <tr>
                    <Th /><Th>商品编码</Th><Th /><Th /><Th />
                    <Th $align="right">上次进价</Th>
                    <Th $align="right">成本均价</Th>
                    <Th>库存数量</Th>
                    <Th $end />
                  </tr>
                </thead>
                <Rows>
                  {goods.map(([code, price, stock], i) => (
                    <Tr key={code} $on={i === 0}>
                      <Td>{i + 1}</Td>
                      <Td>{code}</Td>
                      <Td /><Td /><Td />
                      <Td $align="right">{price}</Td>
                      <Td $align="right">{price}</Td>
                      <Td>{stock}</Td>
                      <Td $end />
                    </Tr>
                  ))}
                </Rows>
              </Table>
              <Pager>
                <PageSize aria-label="每页条数"><option>10</option></PageSize>
                <Sep />
                <PageButton aria-label="第一页"><PageIcon d="M11 1v10L4 6z" bar="M2 1v10" /></PageButton>
                <PageButton aria-label="上一页"><PageIcon d="M9 1v10L2 6z" /></PageButton>
                <Sep />
                <label htmlFor="page">第</label>
                <PageNo $w={46} id="page" defaultValue="1" />
                共1页
                <Sep />
                <PageButton aria-label="下一页"><PageIcon d="M3 1v10l7-5z" /></PageButton>
                <PageButton aria-label="最后一页"><PageIcon d="M1 1v10l7-5z" bar="M10 1v10" /></PageButton>
                <Sep />
                <PageButton aria-label="刷新">
                  <svg width="14" height="14" viewBox="0 0 14 14" aria-hidden="true">
                    <path d="M4.500 3.200a5 5 0 1 0 5 0" fill="none" stroke="#7a716c" strokeWidth="2" />
                    <path d="M6.500 0v6l4-3z" fill="#7a716c" />
                  </svg>
                </PageButton>
                <Summary>显示1到8,共8记录</Summary>
              </Pager>
            </Center>
          </Split>
        </PickBody>
      </PickWindow>

      <ItemWindow role="dialog" aria-label="选择商品">
        <WindowTitle>
          选择商品
          <IconButton aria-label="关闭"><Cross size={10} color="#4f6580" /></IconButton>
        </WindowTitle>
        <WindowBody>
          <ItemContent>
            <Fieldset $dialog>
              <Legend $inset={-9}>商品信息</Legend>
              <InfoGrid>
                {info.map(([name, value]) => (
                  <InfoField key={name}>
                    <Label $w={87} htmlFor={name}>{name}：</Label>
                    <TextBox $w={187} id={name} defaultValue={value} />
                  </InfoField>
                ))}
              </InfoGrid>
            </Fieldset>
            <PriceRow>
              <Label $w={56} htmlFor="price">单价：</Label>
              <PlainBox $w={113} id="price" defaultValue="3000.00" />
              <Label $w={57} $gap={37} htmlFor="amount">数量：</Label>
              <PlainBox $w={113} id="amount" defaultValue="1" />
            </PriceRow>
          </ItemContent>
          <ItemFooter>
            <Button><Icon name="check" />保存并新增下一商品</Button>
            <Button><Icon name="check" />保存</Button>
            <Button><Icon name="cancel" />关闭</Button>
          </ItemFooter>
        </WindowBody>
      </ItemWindow>

      <Watermark>CSDN @说书客啊</Watermark>
    </Page>
  );
}
